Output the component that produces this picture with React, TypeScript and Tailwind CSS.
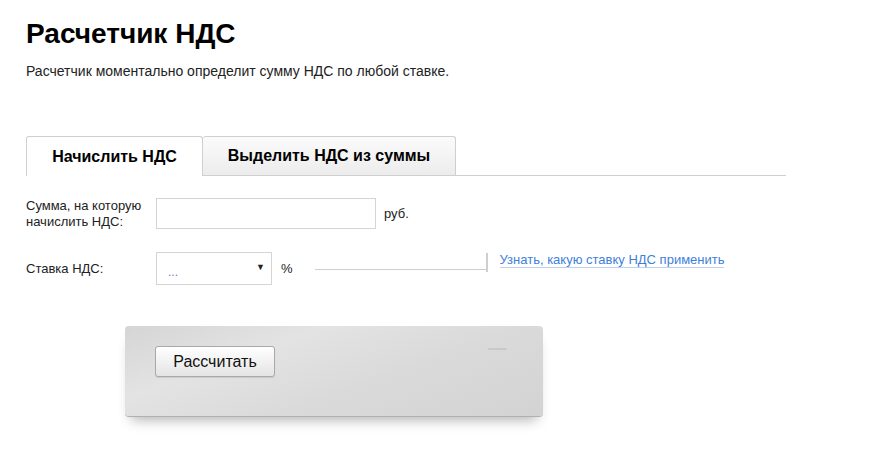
import React from "react";

export default function App() {
  return (
    <div
      className="min-h-[467px] w-[881px] bg-white pl-[26px] text-[#222]"
      style={{ fontFamily: '"Liberation Sans", Arial, sans-serif' }}
    >
      <h1 className="pt-[20px] text-[28px] font-bold leading-[28px] text-black">
        Расчетчик НДС
      </h1>
      <p className="mt-[15px] text-[14px] leading-[16px] text-[#222]">
        Расчетчик моментально определит сумму НДС по любой ставке.
      </p>

      {/* Tabs */}
      <div className="mt-[57px] flex w-[760px] border-b border-[#cfcfcf]">
        <div className="-mb-px flex h-[40px] w-[177px] items-center justify-center rounded-t-[3px] border border-b-0 border-[#cfcfcf] bg-white text-[16px] font-bold text-black">
          Начислить НДС
        </div>
        <div className="flex h-[39px] w-[253px] items-center justify-center rounded-t-[3px] border border-b-0 border-l-0 border-[#cfcfcf] bg-[linear-gradient(#fbfbfb,#ececec)] text-[16px] font-bold text-black">
          Выделить НДС из суммы
        </div>
      </div>

      {/* Row 1 */}
      <div className="mt-[22px] flex items-start">
        <div className="w-[130px] text-[13px] leading-[16px] text-[#222]">
          Сумма, на которую
          <br />
          начислить НДС:
        </div>
        <div className="h-[31px] w-[220px] border border-[#d4d4d4] bg-white" />
        <span className="ml-[8px] self-center text-[13px] leading-[16px]">руб.</span>
      </div>

      {/* Row 2 */}
      <div className="mt-[22px] flex h-[33px] items-center">
        <div className="w-[130px] text-[13px] leading-[16px] text-[#222]">Ставка НДС:</div>
        <div className="relative flex h-[33px] w-[116px] items-end border border-[#d4d4d4] bg-white pb-[6px] pl-[11px]">
          <span className="text-[12px] leading-[12px] text-[#5b7fc4]">...</span>
          <span className="absolute right-[6px] top-[10px] text-[9px] leading-[9px] text-[#222]">▼</span>
        </div>
        <span className="ml-[9px] text-[13px] leading-[16px]">%</span>
        <div className="mb-[12px] ml-[22px] flex h-[19px] w-[173px] items-end">
          <div className="mb-[2px] h-px flex-1 bg-[#cfcfcf]" />
          <div className="h-[19px] w-[2px] bg-[#cfcfcf]" />
        </div>
        <a className="mb-[18px] ml-[12px] border-b border-[#bcd2f0] text-[13px] leading-[15px] text-[#3f7fd8]">
          Узнать, какую ставку НДС применить
        </a>
      </div>

      {/* Panel */}
      <div className="ml-[99px] mt-[41px] w-[418px]">
        <div className="relative h-[90px] rounded-[4px] bg-[linear-gradient(160deg,#d5d5d5_0%,#e3e3e3_30%,#dadada_60%,#d3d3d3_100%)] pl-[30px] pt-[20px] shadow-[0_1px_0_#b0b0b0,0_10px_12px_-6px_rgba(0,0,0,0.3)]">
          <button className="h-[31px] w-[120px] rounded-[3px] border border-[#a9a9a9] bg-[linear-gradient(#ffffff,#e4e4e4)] text-[16px] leading-[18px] text-[#111] shadow-[0_1px_1px_rgba(0,0,0,0.1)]">
            Рассчитать
          </button>
          <div className="absolute right-[36px] top-[22px] h-[2px] w-[19px] rounded bg-[#c8c8c8]" />
        </div>
      </div>
    </div>
  );
}
